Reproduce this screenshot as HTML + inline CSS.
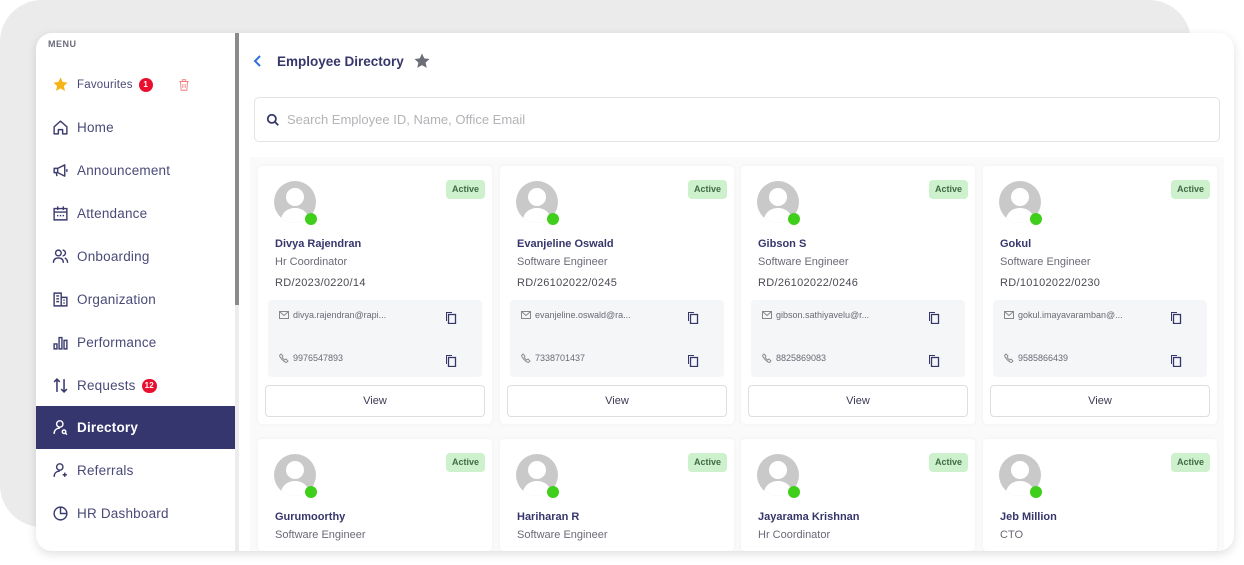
<!DOCTYPE html>
<html style="width:1244px;height:565px;overflow:hidden"><head><meta charset="utf-8"><style>
*{box-sizing:border-box;margin:0;padding:0}
body{width:1244px;height:565px;background:#fff;font-family:"Liberation Sans",sans-serif;position:relative;overflow:hidden;color:#37366b}
.bg{position:absolute;left:0;top:0;width:1191px;height:527px;background:#ebebeb;border-radius:42px}
.panel{position:absolute;left:36px;top:33px;width:1198px;height:518px;background:#fff;border-radius:16px;box-shadow:0 3px 10px rgba(0,0,0,.13);overflow:hidden}
.sb{position:absolute;left:0;top:0;width:199px;height:100%}
.scroll{position:absolute;left:199px;top:0;width:4px;height:100%;background:#ececec}
.scroll i{position:absolute;left:0;top:0;width:4px;height:272px;background:#8a8a8a}
.menu{position:absolute;left:12px;top:6px;font-size:9px;font-weight:bold;color:#6b6b7b;letter-spacing:.5px}
.it{position:absolute;left:0;width:199px;height:43px;display:flex;align-items:center;padding-left:16px;font-size:13.5px;color:#4a4a78;letter-spacing:.2px}
.it svg{width:17px;height:17px;margin-right:8px;flex:none}
.it.act{background:#36366f;color:#fff;font-weight:bold}
.badge{display:inline-block;background:#e8102e;color:#fff;font-size:8px;font-weight:bold;border-radius:8px;min-width:14px;height:14px;line-height:14px;text-align:center;margin-left:6px;padding:0 3px}
.hdr{position:absolute;left:217px;top:19px;display:flex;align-items:center;font-size:13.5px;font-weight:bold;color:#36366b}
.search{position:absolute;left:218px;top:64px;width:966px;height:45px;border:1px solid #e3e3e3;border-radius:5px;display:flex;align-items:center;padding-left:11px;font-size:13px;color:#b3b3b8}
.grid{position:absolute;left:214px;top:124px;width:974px;height:394px;background:#fafafa;overflow:hidden}
.card{position:absolute;width:234px;height:258px;background:#fff;border-radius:4px;box-shadow:0 0 4px rgba(0,0,0,.05);overflow:hidden}
.av{position:absolute;left:16px;top:15px;width:42px;height:42px;border-radius:50%;background:#c9c9c9;overflow:hidden}
.dot{position:absolute;left:47px;top:47px;width:12px;height:12px;border-radius:50%;background:#3fcf1a}
.act-b{position:absolute;right:7px;top:14px;width:39px;height:19px;background:#cdf1cc;border-radius:4px;font-size:9px;font-weight:bold;color:#3f6b45;text-align:center;line-height:19px}
.nm{position:absolute;left:17px;top:72px;font-size:11px;font-weight:bold;color:#37366b}
.tt{position:absolute;left:17px;top:90px;font-size:11px;color:#6a6a78}
.id{position:absolute;left:17px;top:111px;font-size:11px;color:#4a4a55;letter-spacing:.3px}
.box{position:absolute;left:10px;top:134px;width:214px;height:77px;background:#f5f6f8;border-radius:4px}
.row{position:absolute;left:11px;font-size:9px;color:#6a6a75;display:flex;align-items:center}
.row svg{margin-right:4px}
.cp{position:absolute;left:177px;width:12px;height:13px}
.view{position:absolute;left:7px;top:219px;width:220px;height:32px;border:1px solid #dedede;border-radius:4px;text-align:center;line-height:30px;font-size:11px;color:#3b3b55}
</style></head><body>
<div class="bg"></div>
<div class="panel">
 <div class="sb">
  <div class="menu">MENU</div>
  <div class="it" style="top:30px;font-size:11.5px"><svg viewBox="0 0 24 24"><path d="M12 2l3 6.5 7 .8-5.2 4.8 1.5 7-6.3-3.6-6.3 3.6 1.5-7L2 9.3l7-.8z" fill="#f5b316"/></svg>Favourites<span class="badge">1</span>
   <svg viewBox="0 0 24 24" style="width:14px;height:14px;margin-left:24px"><path d="M4 6h16M9 6V3h6v3M6 6l1 15h10l1-15M10 10v7M14 10v7" fill="none" stroke="#f08080" stroke-width="1.6"/></svg></div>
  <div class="it" style="top:73px"><svg viewBox="0 0 24 24"><path d="M3 11l9-8 9 8v10h-6v-6h-6v6H3z" fill="none" stroke="#3b3b6e" stroke-width="2" stroke-linejoin="round"/></svg>Home</div>
  <div class="it" style="top:116px"><svg viewBox="0 0 24 24"><path d="M3 9h5l10-5v16L8 15H3zM8 9v6M6 15l1 5M21 10v4" fill="none" stroke="#3b3b6e" stroke-width="2" stroke-linejoin="round"/></svg>Announcement</div>
  <div class="it" style="top:159px"><svg viewBox="0 0 24 24"><path d="M3 5h18v16H3zM3 10h18M8 2v5M16 2v5M7 15h2M11 15h2M15 15h2" fill="none" stroke="#3b3b6e" stroke-width="2"/></svg>Attendance</div>
  <div class="it" style="top:202px"><svg viewBox="0 0 24 24"><circle cx="9" cy="7" r="4" fill="none" stroke="#3b3b6e" stroke-width="2"/><path d="M2 21c0-5 3-7 7-7s7 2 7 7M15 3a4 4 0 010 8M18 14c2 1 4 3 4 7" fill="none" stroke="#3b3b6e" stroke-width="2"/></svg>Onboarding</div>
  <div class="it" style="top:245px"><svg viewBox="0 0 24 24"><path d="M3 21V3h10v18M13 9h8v12M2 21h20M6 7h4M6 11h4M6 15h4M16 13h2M16 17h2" fill="none" stroke="#3b3b6e" stroke-width="2"/></svg>Organization</div>
  <div class="it" style="top:288px"><svg viewBox="0 0 24 24"><path d="M3 14h4v7H3zM10 5h4v16h-4zM17 9h4v12h-4z" fill="none" stroke="#3b3b6e" stroke-width="2"/></svg>Performance</div>
  <div class="it" style="top:331px"><svg viewBox="0 0 24 24"><path d="M7 21V3M3 7l4-4 4 4M17 3v18M13 17l4 4 4-4" fill="none" stroke="#3b3b6e" stroke-width="2.2"/></svg>Requests<span class="badge">12</span></div>
  <div class="it act" style="top:373px"><svg viewBox="0 0 24 24"><circle cx="11" cy="7" r="4.5" fill="none" stroke="#fff" stroke-width="2"/><path d="M3 21c0-5 3-8 8-8" fill="none" stroke="#fff" stroke-width="2"/><circle cx="17" cy="18" r="2.5" fill="none" stroke="#fff" stroke-width="2"/><path d="M19 20l2 2" stroke="#fff" stroke-width="2"/></svg>Directory</div>
  <div class="it" style="top:416px"><svg viewBox="0 0 24 24"><circle cx="11" cy="7" r="4.5" fill="none" stroke="#3b3b6e" stroke-width="2"/><path d="M3 21c0-5 3-8 8-8M18 15v6M15 18h6" fill="none" stroke="#3b3b6e" stroke-width="2"/></svg>Referrals</div>
  <div class="it" style="top:459px"><svg viewBox="0 0 24 24"><circle cx="12" cy="12" r="9" fill="none" stroke="#3b3b6e" stroke-width="2"/><path d="M12 3v9h9" fill="none" stroke="#3b3b6e" stroke-width="2"/></svg>HR Dashboard</div>
 </div>
 <div class="scroll"><i></i></div>
 <div class="hdr"><svg width="10" height="12" viewBox="0 0 10 12" style="margin-right:14px"><path d="M7 1L2 6l5 5" fill="none" stroke="#2f6fe0" stroke-width="2"/></svg>Employee Directory<svg width="18" height="18" viewBox="0 0 24 24" style="margin-left:9px"><path d="M12 2l3 6.5 7 .8-5.2 4.8 1.5 7-6.3-3.6-6.3 3.6 1.5-7L2 9.3l7-.8z" fill="#6b6e76"/></svg></div>
 <div class="search"><svg width="14" height="14" viewBox="0 0 24 24" style="margin-right:7px"><circle cx="10" cy="10" r="7" fill="none" stroke="#36366b" stroke-width="3"/><path d="M15 15l6 6" stroke="#36366b" stroke-width="3"/></svg>Search Employee ID, Name, Office Email</div>
 <div class="grid" id="cards"></div>
</div>
<script>
var d=[["Divya Rajendran","Hr Coordinator","RD/2023/0220/14","divya.rajendran@rapi...","9976547893"],
["Evanjeline Oswald","Software Engineer","RD/26102022/0245","evanjeline.oswald@ra...","7338701437"],
["Gibson S","Software Engineer","RD/26102022/0246","gibson.sathiyavelu@r...","8825869083"],
["Gokul","Software Engineer","RD/10102022/0230","gokul.imayavaramban@...","9585866439"],
["Gurumoorthy","Software Engineer","RD/2023/0101/01","",""],
["Hariharan R","Software Engineer","RD/26102022/0247","",""],
["Jayarama Krishnan","Hr Coordinator","RD/26102022/0248","",""],
["Jeb Million","CTO","RD/10102022/0231","",""]];
var xs=[8,250,491,733],ys=[9,282],h="";
var person='<svg width="42" height="42" viewBox="0 0 42 42"><circle cx="21" cy="16" r="9" fill="#fff"/><path d="M6 42c1-10 7-15 15-15s14 5 15 15z" fill="#fff"/></svg>';
var cp='<svg class="cp" viewBox="0 0 12 13" style="top:TTpx"><path d="M1 1h6v1H2v8H1z" fill="#36366b"/><rect x="3.5" y="3.5" width="7" height="9" fill="none" stroke="#36366b" stroke-width="1.3"/></svg>';
d.forEach(function(e,i){var x=xs[i%4],y=ys[i>>2];
h+='<div class="card" style="left:'+x+'px;top:'+y+'px;height:'+(i<4?258:112)+'px"><div class="av">'+person+'</div><div class="dot"></div><div class="act-b">Active</div><div class="nm">'+e[0]+'</div><div class="tt">'+e[1]+'</div><div class="id">'+e[2]+'</div>';
if(e[3])h+='<div class="box"><div class="row" style="top:10px"><svg width="10" height="8" viewBox="0 0 10 8"><rect x=".5" y=".5" width="9" height="7" fill="none" stroke="#888"/><path d="M.5.5L5 4.5 9.5.5" fill="none" stroke="#888"/></svg>'+e[3]+'</div><div class="row" style="top:53px"><svg width="10" height="10" viewBox="0 0 10 10"><path d="M2 1l2 2-1 1.5 2.5 2.5L7 6l2 2-1.5 1.5C5 9 1 5 .5 2.5z" fill="none" stroke="#888" stroke-width=".9"/></svg>'+e[4]+'</div>'+cp.replace('TT','11')+cp.replace('TT','54')+'</div><div class="view">View</div>';
h+='</div>';});
document.getElementById('cards').innerHTML=h;
</script>
</body></html>
